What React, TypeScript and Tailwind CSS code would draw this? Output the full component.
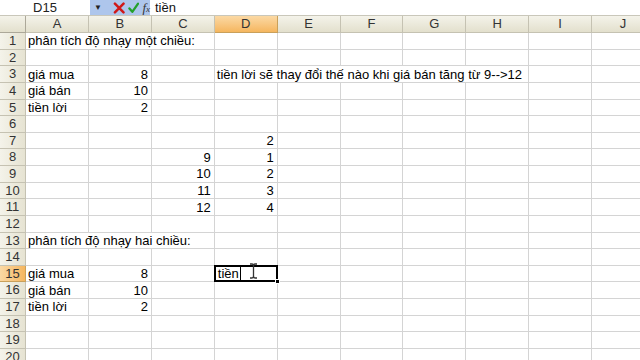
import React from "react";

type Cell = { col: number; text: string; span?: number; right?: boolean };

const COLS = ["A", "B", "C", "D", "E", "F", "G", "H", "I", "J"];

const SPAN: Record<number, string> = {
  1: "col-span-1",
  2: "col-span-2",
  3: "col-span-3",
  4: "col-span-4",
  5: "col-span-5",
};

const ROWS: Record<number, Cell[]> = {
  1: [{ col: 0, text: "phân tích độ nhạy một chiều:", span: 3 }],
  3: [
    { col: 0, text: "giá mua" },
    { col: 1, text: "8", right: true },
    { col: 3, text: "tiền lời sẽ thay đổi thế nào khi giá bán tăng từ 9-->12", span: 5 },
  ],
  4: [
    { col: 0, text: "giá bán" },
    { col: 1, text: "10", right: true },
  ],
  5: [
    { col: 0, text: "tiền lời" },
    { col: 1, text: "2", right: true },
  ],
  7: [{ col: 3, text: "2", right: true }],
  8: [
    { col: 2, text: "9", right: true },
    { col: 3, text: "1", right: true },
  ],
  9: [
    { col: 2, text: "10", right: true },
    { col: 3, text: "2", right: true },
  ],
  10: [
    { col: 2, text: "11", right: true },
    { col: 3, text: "3", right: true },
  ],
  11: [
    { col: 2, text: "12", right: true },
    { col: 3, text: "4", right: true },
  ],
  13: [{ col: 0, text: "phân tích độ nhạy hai chiều:", span: 3 }],
  15: [
    { col: 0, text: "giá mua" },
    { col: 1, text: "8", right: true },
  ],
  16: [
    { col: 0, text: "giá bán" },
    { col: 1, text: "10", right: true },
  ],
  17: [
    { col: 0, text: "tiền lời" },
    { col: 1, text: "2", right: true },
  ],
};

const gridCols = "grid grid-cols-[26px_63px_repeat(9,62.9px)]";
const cellBase = "h-[16.63px] border-r border-b border-[#d4d4d4] whitespace-nowrap overflow-hidden flex items-center leading-none";

function FormulaBar() {
  return (
    <div className="h-[16px] flex items-stretch bg-white border-b border-[#c9c7ba]">
      <div className="w-[90px] flex items-center justify-center text-[13px] text-[#222]">D15</div>
      <div className="w-[60px] bg-[#aec6ec] flex items-center pl-[4px]">
        <span className="text-[8px] text-[#222] w-[14px]">▼</span>
        <svg className="ml-[6px]" width="13" height="12" viewBox="0 0 13 12">
          <path d="M2 1.5 L11 10.5 M11 1.5 L2 10.5" stroke="#d01818" strokeWidth="2.6" strokeLinecap="round" />
        </svg>
        <svg className="ml-[2px]" width="12" height="12" viewBox="0 0 12 12">
          <path d="M1.5 6.5 L4.5 10 L10.5 1.5" stroke="#24a02c" strokeWidth="2.4" fill="none" strokeLinecap="round" strokeLinejoin="round" />
        </svg>
        <span className="ml-[3px] font-['Liberation_Serif',serif] italic text-[13px] text-[#333] leading-none">
          f<span className="text-[9px]">x</span>
        </span>
      </div>
      <div className="flex items-center pl-[5px] text-[13px] text-[#111]">tiền</div>
    </div>
  );
}

function HeaderRow() {
  return (
    <div className={gridCols}>
      <div className="h-[17px] bg-gradient-to-b from-[#f4f3ea] to-[#e3e0cd] border-r border-b border-[#aca899]" />
      {COLS.map((c) => (
        <div
          key={c}
          className={
            c === "D"
              ? "h-[17px] flex items-center justify-center text-[13px] text-[#333] bg-gradient-to-b from-[#fbd9a4] to-[#f5b65e] border-r border-b border-[#c9a05a]"
              : "h-[17px] flex items-center justify-center text-[13px] text-[#333] bg-gradient-to-b from-[#f4f3ea] to-[#e3e0cd] border-r border-b border-[#c5c2b2]"
          }
        >
          {c}
        </div>
      ))}
    </div>
  );
}

function ActiveCell() {
  return (
    <div className={`${cellBase} relative overflow-visible`}>
      <div className="absolute -left-[1px] -top-[1px] -right-[1px] -bottom-[1px] border-2 border-black" />
      <div className="absolute -right-[3px] -bottom-[3px] w-[5px] h-[5px] bg-black border border-white" />
      <span className="pl-[3px] text-black">tiền</span>
      <span className="ml-[1px] w-[1px] h-[14px] bg-black" />
      <svg className="absolute left-[34px] -top-[3px]" width="9" height="16" viewBox="0 0 9 16">
        <path d="M1 1 H3 Q4.5 1 4.5 3 V13 Q4.5 15 3 15 H1 M8 1 H6 Q4.5 1 4.5 3 M4.5 13 Q4.5 15 6 15 H8" stroke="#333" strokeWidth="1.3" fill="none" />
      </svg>
    </div>
  );
}

function Row({ n }: { n: number }) {
  const cells = ROWS[n] ?? [];
  const out: React.ReactNode[] = [];
  let c = 0;
  while (c < COLS.length) {
    if (n === 15 && c === 3) {
      out.push(<ActiveCell key={c} />);
      c += 1;
      continue;
    }
    const cell = cells.find((x) => x.col === c);
    const span = cell?.span ?? 1;
    out.push(
      <div
        key={c}
        className={`${cellBase} ${SPAN[span]} ${cell?.right ? "justify-end pr-[3px]" : "pl-[2px]"} text-black`}
      >
        {cell?.text ?? ""}
      </div>
    );
    c += span;
  }
  const selected = n === 15;
  return (
    <div className={gridCols}>
      <div
        className={
          selected
            ? "h-[16.63px] flex items-center justify-center text-[13px] text-[#333] bg-gradient-to-r from-[#fbd9a4] to-[#f5b65e] border-r border-b border-[#c9a05a]"
            : "h-[16.63px] flex items-center justify-center text-[13px] text-[#333] bg-gradient-to-r from-[#f4f3ea] to-[#e6e3d2] border-r border-b border-[#c5c2b2]"
        }
      >
        {n}
      </div>
      {out}
    </div>
  );
}

export default function App() {
  const rows = Array.from({ length: 20 }, (_, i) => i + 1);
  return (
    <div className="w-[640px] h-[360px] overflow-hidden bg-white font-['Liberation_Sans',Arial,sans-serif] text-[13px]">
      <FormulaBar />
      <HeaderRow />
      {rows.map((n) => (
        <Row key={n} n={n} />
      ))}
    </div>
  );
}
